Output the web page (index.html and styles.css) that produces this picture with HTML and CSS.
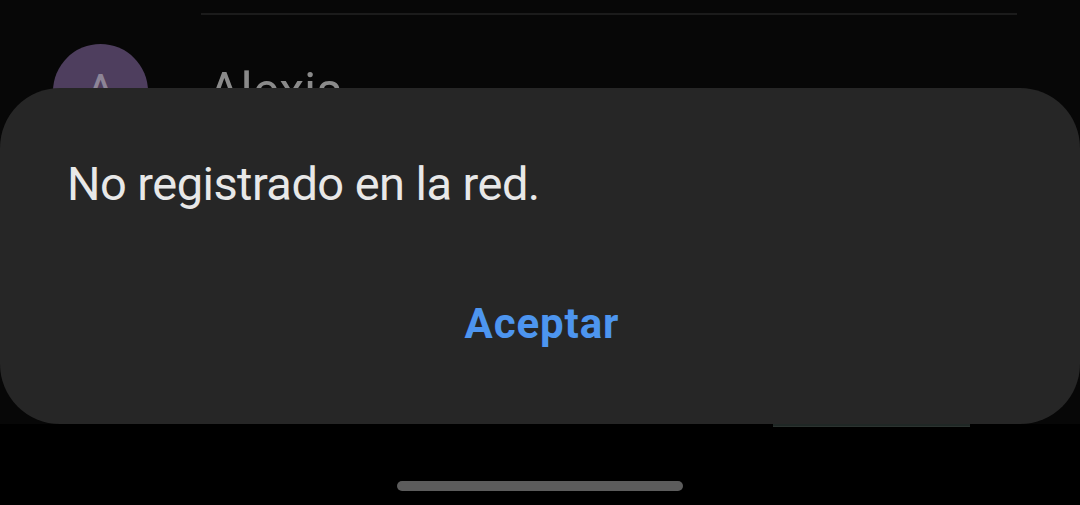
FILE: index.html
```html
<!DOCTYPE html>
<html lang="es">
<head>
  <meta charset="UTF-8">
  <meta name="viewport" content="width=device-width, initial-scale=1.0">
  <title>No registrado en la red</title>
  <link rel="stylesheet" href="styles.css">
</head>
<body>
  <div class="screen">
    <div class="contacts">
      <div class="divider"></div>
      <div class="contact">
        <div class="avatar">A</div>
        <div class="name">Alexis</div>
      </div>
      <div class="peek"></div>
    </div>

    <div class="dialog">
      <p class="dialog-text">No registrado en la red.</p>
      <button class="dialog-btn">Aceptar</button>
    </div>

    <div class="nav">
      <div class="home-bar"></div>
    </div>
  </div>
</body>
</html>
```

FILE: styles.css
```css
body {
  margin: 0;
  background-color: #000;
  font-family: Roboto, "Noto Sans", Arial, sans-serif;
}
.screen {
  position: relative;
  width: 1080px;
  height: 505px;
  overflow: hidden;
  display: flex;
  flex-direction: column;
}
.contacts {
  height: 424px;
  flex-shrink: 0;
  background-color: #070707;
  display: flex;
  flex-direction: column;
}
.divider {
  margin: 13px 63px 0 201px;
  height: 2px;
  background-color: #1b1b1b;
}
.contact {
  display: flex;
  align-items: flex-start;
  padding: 29px 0 0 53px;
  gap: 60px;
}
.avatar {
  width: 95px;
  height: 95px;
  border-radius: 50%;
  background-color: #4e3e5e;
  color: #8d8597;
  font-size: 46px;
  display: flex;
  justify-content: center;
  padding-top: 20px;
  box-sizing: border-box;
}
.name {
  color: #8a8a8a;
  font-size: 50px;
  line-height: 1;
  padding-top: 22px;
}
.peek {
  margin: auto 110px -3px 773px;
  height: 6px;
  background-color: #1f2725;
  border-bottom: 1px solid #2b3330;
}
.dialog {
  position: absolute;
  left: 0;
  top: 88px;
  width: 1080px;
  height: 336px;
  box-sizing: border-box;
  border-radius: 60px;
  background-color: #262626;
  padding: 72px 67px 0;
  display: flex;
  flex-direction: column;
}
.dialog-text {
  margin: 0;
  color: #e8e8e8;
  font-size: 47px;
  line-height: 47px;
  letter-spacing: -0.55px;
}
.dialog-btn {
  margin: 96px auto 0;
  padding: 0 0 0 4px;
  border: none;
  background: none;
  color: #4d95ef;
  font-family: inherit;
  font-size: 42px;
  line-height: 42px;
  font-weight: 700;
  letter-spacing: 0.9px;
}
.nav {
  flex: 1;
  display: flex;
  justify-content: center;
  align-items: flex-start;
  padding-top: 57px;
}
.home-bar {
  width: 286px;
  height: 10px;
  border-radius: 5px;
  background-color: #5c5c5c;
}
```
